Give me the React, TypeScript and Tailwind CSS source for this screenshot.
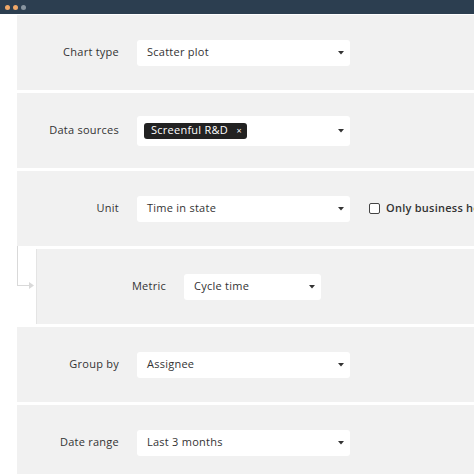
import React from "react";

const font = { fontFamily: '"Open Sans", "Noto Sans", sans-serif' };

function Caret() {
  return (
    <svg width="6" height="4" viewBox="0 0 6 4" className="shrink-0">
      <path d="M0 0 L6 0 L3 3.5 Z" fill="#333" />
    </svg>
  );
}

function Select({ children, width, tall }: { children: React.ReactNode; width: string; tall?: boolean }) {
  return (
    <div
      className={`${width} ${tall ? "h-[30px] pl-[7px]" : "h-[26px] pl-[10px]"} bg-white rounded-[3px] flex items-center justify-between pr-[6px] shrink-0`}
    >
      <div className="flex items-center text-[11px] text-[#333] font-medium tracking-[0.25px]">{children}</div>
      <Caret />
    </div>
  );
}

function Row({ label, children, extra }: { label: string; children: React.ReactNode; extra?: React.ReactNode }) {
  return (
    <div className="h-[75px] bg-[#f1f1f1] flex items-center shrink-0">
      <div className="w-[102px] text-right text-[11px] text-[#333] font-medium tracking-[0.25px] shrink-0">{label}</div>
      <div className="w-[18px] shrink-0" />
      {children}
      {extra}
    </div>
  );
}

export default function App() {
  return (
    <div className="w-[474px] h-[474px] bg-white overflow-hidden" style={font}>
      <div className="h-[14px] bg-[#2c3e50] flex items-center gap-[3px] pl-[5px]">
        <span className="w-[5px] h-[5px] rounded-full bg-[#f0a868]" />
        <span className="w-[5px] h-[5px] rounded-full bg-[#f0a868]" />
        <span className="w-[5px] h-[5px] rounded-full bg-[#8995a0]" />
      </div>
      <div className="ml-[17px] mt-[1px] flex flex-col gap-[3px]">
        <Row label="Chart type">
          <Select width="w-[213px]">Scatter plot</Select>
        </Row>
        <Row label="Data sources">
          <Select width="w-[213px]" tall>
            <span className="bg-[#222] text-white rounded-[3px] h-[16px] w-[103px] flex items-center pl-[7px] pr-[5px] justify-between">
              <span>Screenful R&amp;D</span>
              <span className="text-[9px] leading-none">×</span>
            </span>
          </Select>
        </Row>
        <Row
          label="Unit"
          extra={
            <div className="flex items-center ml-[19px] whitespace-nowrap">
              <span className="w-[11px] h-[11px] border-[1.5px] border-[#444] rounded-[2px] bg-white shrink-0" />
              <span className="ml-[6px] text-[11px] font-semibold text-[#333] tracking-[0.25px]">Only business hours</span>
            </div>
          }
        >
          <Select width="w-[213px]">Time in state</Select>
        </Row>
        <div className="flex h-[75px] shrink-0 relative">
          <div className="w-[19px] shrink-0 relative">
            <div className="absolute left-0 top-[-3px] w-[1px] h-[39px] bg-[#d9d9d9]" />
            <div className="absolute left-0 top-[36px] w-[15px] h-[1px] bg-[#d9d9d9]" />
            <svg className="absolute left-[12px] top-[33px]" width="6" height="7" viewBox="0 0 6 7">
              <path d="M0 0 L5 3.5 L0 7 Z" fill="#d9d9d9" />
            </svg>
          </div>
          <div className="flex-1 bg-[#f1f1f1] border-l border-[#e4e4e4] flex items-center">
            <div className="w-[129px] text-right text-[11px] text-[#333] font-medium tracking-[0.25px] shrink-0">Metric</div>
            <div className="w-[18px] shrink-0" />
            <Select width="w-[137px]">Cycle time</Select>
          </div>
        </div>
        <Row label="Group by">
          <Select width="w-[213px]">Assignee</Select>
        </Row>
        <Row label="Date range">
          <Select width="w-[213px]">Last 3 months</Select>
        </Row>
      </div>
    </div>
  );
}
